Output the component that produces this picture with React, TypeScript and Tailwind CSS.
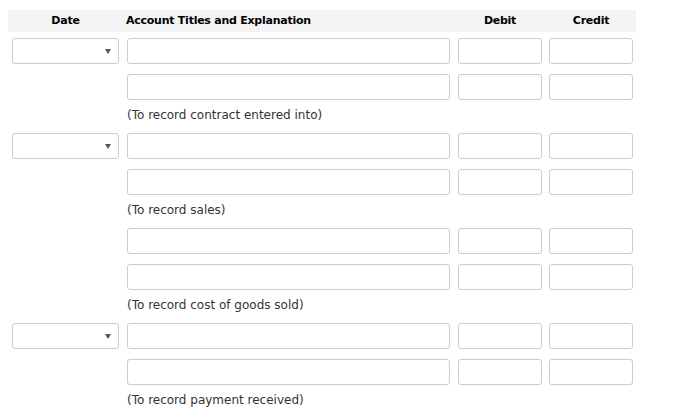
export default function App() {
  const groups = [
    { rows: [true, false], note: '(To record contract entered into)' },
    { rows: [true, false], note: '(To record sales)' },
    { rows: [false, false], note: '(To record cost of goods sold)' },
    { rows: [true, false], note: '(To record payment received)' },
  ];

  const box = 'h-[26px] rounded-[3px] border border-[#cccccc] bg-white';

  return (
    <div className="min-h-screen bg-white pl-[8px] pt-[10px] font-['DejaVu_Sans',sans-serif] text-[12px] text-[#333]">
      <div className="grid h-[22px] w-[628px] grid-cols-[115px_331px_92px_90px] items-center bg-[#f4f4f4] text-[11px] font-bold tracking-[-0.25px] text-black">
        <div className="text-center">Date</div>
        <div className="pl-[3px]">Account Titles and Explanation</div>
        <div className="text-center">Debit</div>
        <div className="text-center">Credit</div>
      </div>
      <div className="mt-[1px] w-[629px]">
        {groups.map((g, gi) => (
          <div key={gi}>
            {g.rows.map((hasDate, ri) => (
              <div key={ri} className="grid grid-cols-[115px_331px_92px_91px] py-[5px]">
                <div className="pl-[4px] pr-[4px]">
                  {hasDate && (
                    <div className={`${box} flex items-center justify-end pr-[7px]`}>
                      <svg width="6" height="5" viewBox="0 0 6 5">
                        <path d="M0 0 L6 0 L3 5 Z" fill="#555" />
                      </svg>
                    </div>
                  )}
                </div>
                <div className="pl-[4px] pr-[4px]">
                  <div className={box} />
                </div>
                <div className="pl-[4px] pr-[4px]">
                  <div className={box} />
                </div>
                <div className="pl-[3px] pr-[4px]">
                  <div className={box} />
                </div>
              </div>
            ))}
            <div className="h-[23px] pl-[119px] pt-[3px] leading-[15px]">{g.note}</div>
          </div>
        ))}
      </div>
    </div>
  );
}
